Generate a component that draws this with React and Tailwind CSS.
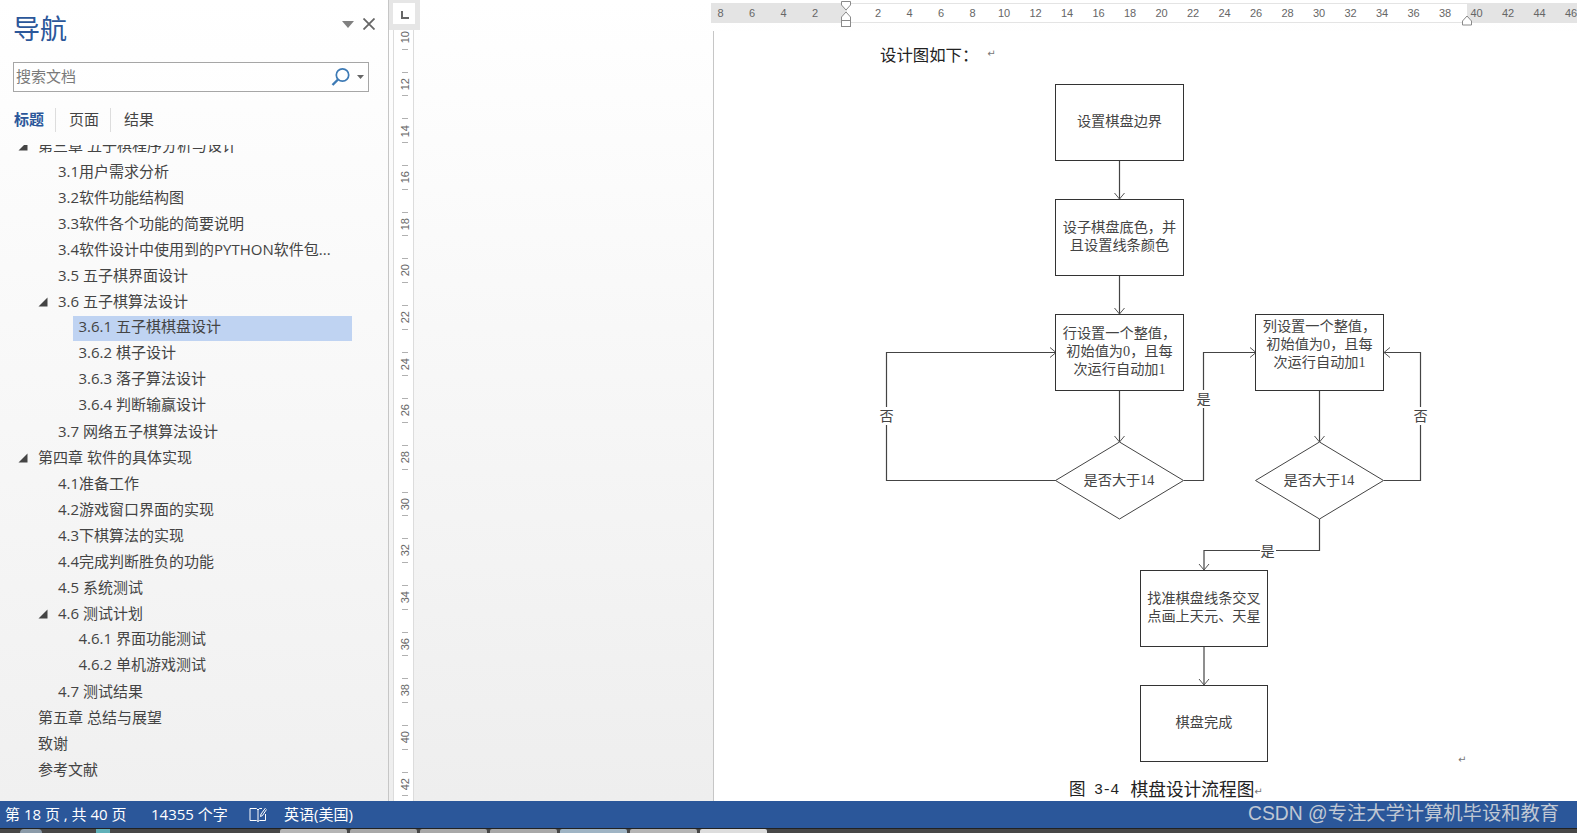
const ui = "font-['Open_Sans','Noto_Sans_CJK_SC',sans-serif]";
const doc = "font-['Liberation_Serif','Noto_Sans_CJK_SC',serif]";

const rows = [
  { t: "第三章 五子棋程序分析与设计", l: 0, a: true },
  { t: "3.1用户需求分析", l: 1 },
  { t: "3.2软件功能结构图", l: 1 },
  { t: "3.3软件各个功能的简要说明", l: 1 },
  { t: "3.4软件设计中使用到的PYTHON软件包...", l: 1 },
  { t: "3.5 五子棋界面设计", l: 1 },
  { t: "3.6 五子棋算法设计", l: 1, a: true },
  { t: "3.6.1 五子棋棋盘设计", l: 2, s: true },
  { t: "3.6.2 棋子设计", l: 2 },
  { t: "3.6.3 落子算法设计", l: 2 },
  { t: "3.6.4 判断输赢设计", l: 2 },
  { t: "3.7 网络五子棋算法设计", l: 1 },
  { t: "第四章 软件的具体实现", l: 0, a: true },
  { t: "4.1准备工作", l: 1 },
  { t: "4.2游戏窗口界面的实现", l: 1 },
  { t: "4.3下棋算法的实现", l: 1 },
  { t: "4.4完成判断胜负的功能", l: 1 },
  { t: "4.5 系统测试", l: 1 },
  { t: "4.6 测试计划", l: 1, a: true },
  { t: "4.6.1 界面功能测试", l: 2 },
  { t: "4.6.2 单机游戏测试", l: 2 },
  { t: "4.7 测试结果", l: 1 },
  { t: "第五章 总结与展望", l: 0 },
  { t: "致谢", l: 0 },
  { t: "参考文献", l: 0 },
];

const pad = ["pl-[38px]", "pl-[58px]", "pl-[73px]"];
const arrowPos = ["left-[18px]", "left-[38px]", "left-[58px]"];

function TreeRow({ r }) {
  return (
    <div className={"relative h-[26px] flex items-center " + pad[r.l]}>
      {r.a && (
        <svg className={"absolute top-[9px] " + arrowPos[r.l]} width="10" height="10" viewBox="0 0 10 10">
          <polygon points="0.5,9.5 9.5,9.5 9.5,0.5" fill="#444444" />
        </svg>
      )}
      {r.l === 2 ? (
        <div className={"w-[279px] h-[25px] mt-[2px] flex items-center pl-[5.5px] pb-[3px] " + (r.s ? "bg-[#bfd3f2]" : "")}>
          <span className="text-[15px] text-[#444444] whitespace-nowrap">{r.t}</span>
        </div>
      ) : (
        <span className="text-[15px] text-[#444444] whitespace-nowrap">{r.t}</span>
      )}
    </div>
  );
}

function Nav() {
  return (
    <aside className={"w-[389px] shrink-0 h-full border-r border-[#c6c6c6] bg-gradient-to-b from-white to-[#f0f0f0] flex flex-col " + ui}>
      <div className="h-[62px] shrink-0 flex items-start pl-[13px] pr-[13px]">
        <span className="text-[27px] leading-[36px] mt-[11px] text-[#2b579a]">导航</span>
        <div className="ml-auto flex items-center gap-[9px] mt-[18px]">
          <svg width="12" height="7" viewBox="0 0 12 7"><polygon points="0,0 12,0 6,7" fill="#808080" /></svg>
          <svg width="12" height="12" viewBox="0 0 12 12"><path d="M0.5 0.5 L11.5 11.5 M11.5 0.5 L0.5 11.5" stroke="#666666" strokeWidth="1.8" fill="none" /></svg>
        </div>
      </div>
      <div className="ml-[13px] mr-[19px] h-[30px] shrink-0 border border-[#a6a6a6] bg-white/60 flex items-center pl-[2px] pr-[4px]">
        <span className="text-[15px] leading-[20px] -mt-[2px] text-[#7a7a7a]">搜索文档</span>
        <svg className="ml-auto" width="20" height="20" viewBox="0 0 20 20">
          <circle cx="11.5" cy="8" r="6.2" stroke="#3d7ab5" strokeWidth="1.7" fill="none" />
          <path d="M7 12.5 L1.5 18" stroke="#3d7ab5" strokeWidth="2.4" fill="none" />
        </svg>
        <svg className="ml-[6px]" width="7" height="4" viewBox="0 0 7 4"><polygon points="0,0 7,0 3.5,4" fill="#666666" /></svg>
      </div>
      <div className="h-[53px] shrink-0 flex items-center pl-[14px] pt-[2px] text-[15px]">
        <span className="font-bold text-[#2b579a] w-[41px]">标题</span>
        <span className="w-px h-[24px] bg-[#dddddd]" />
        <span className="ml-[13px] w-[41px] text-[#444444]">页面</span>
        <span className="w-px h-[24px] bg-[#dddddd]" />
        <span className="ml-[13px] text-[#444444]">结果</span>
      </div>
      <div className="flex-1 overflow-hidden">
        <div className="-mt-[13px]">
          {rows.map((r) => (
            <TreeRow key={r.t} r={r} />
          ))}
        </div>
      </div>
    </aside>
  );
}

const vNums = [10, 12, 14, 16, 18, 20, 22, 24, 26, 28, 30, 32, 34, 36, 38, 40, 42];

function VRuler() {
  return (
    <div className="w-[31px] shrink-0 flex flex-col h-full">
      <div className="h-[30px] shrink-0 bg-[#e6e6e6] pl-[4px] pt-[3px]">
        <div className="w-[22px] h-[21px] bg-white flex items-center justify-center pt-[3px] pl-[2px]">
          <div className="w-[8px] h-[8px] border-l-2 border-b-2 border-[#666666]" />
        </div>
      </div>
      <div className="flex-1 ml-[4px] w-[21px] bg-white border-x border-[#dcdcdc] overflow-hidden">
        <div className="-mt-[16px] pl-[7px]">
          {vNums.map((n) => (
            <div key={n} className="h-[46.67px] flex flex-col items-center justify-between py-[11px] w-[7px] font-['Liberation_Sans',sans-serif]">
              <div className="w-[6px] h-px shrink-0 bg-[#b0b0b0]" />
              <span className="[writing-mode:vertical-rl] rotate-180 text-[11px] leading-[10px] text-[#666666]">{n}</span>
              <div className="w-[6px] h-px shrink-0 bg-[#b0b0b0]" />
            </div>
          ))}
        </div>
      </div>
    </div>
  );
}

const hNums = [8, 6, 4, 2, "", 2, 4, 6, 8, 10, 12, 14, 16, 18, 20, 22, 24, 26, 28, 30, 32, 34, 36, 38, 40, 42, 44, 46];

function HRuler() {
  return (
    <div className="h-[31px] shrink-0 pt-[3px] relative">
      <div className="relative h-[20px] flex overflow-hidden">
        <div className="w-[135.5px] h-full bg-[#e4e4e4]" />
        <div className="w-[620.5px] h-full bg-white border-y border-[#e4e4e4]" />
        <div className="flex-1 h-full bg-[#e4e4e4]" />
        <div className="absolute left-[-6.25px] top-0 h-full flex font-['Liberation_Sans',sans-serif]">
          {hNums.map((n, i) => (
            <span key={i} className="w-[31.5px] shrink-0 h-full flex items-center justify-center text-[11px] text-[#666666]">{n}</span>
          ))}
        </div>
      </div>
      <svg className="absolute left-[129px] top-0" width="12" height="31" viewBox="0 0 12 31">
        <path d="M1.5 1.5 H10.5 V5 L6 10 L1.5 5 Z" fill="white" stroke="#8a8a8a" />
        <path d="M6 12 L10.5 17 V20.5 H1.5 V17 Z" fill="white" stroke="#8a8a8a" />
        <rect x="1.5" y="20.5" width="9" height="6" fill="white" stroke="#8a8a8a" />
      </svg>
      <svg className="absolute left-[750px] top-[15px]" width="12" height="11" viewBox="0 0 12 11">
        <path d="M6 1 L10.5 6 V10 H1.5 V6 Z" fill="white" stroke="#8a8a8a" />
      </svg>
    </div>
  );
}

function Box({ pos, children, top }) {
  return (
    <div className={"absolute h-[77px] bg-white border border-[#333333] flex justify-center text-center text-[14.2px] leading-[18px] text-[#444444] whitespace-nowrap " + (top ? "items-start pt-[2px] " : "items-center pb-[3px] ") + pos}>
      <div>{children}</div>
    </div>
  );
}

function Arrow({ d }) {
  return <path d={d} stroke="#555555" fill="none" strokeWidth="1" />;
}

function Flow() {
  return (
    <div className={"relative h-[697px] shrink-0 " + doc}>
      <svg className="absolute left-0 top-0" width="862" height="697" viewBox="0 0 862 697">
        <g stroke="#444444" fill="none" strokeWidth="1.2">
          <path d="M405.5 77 V115" />
          <path d="M405.5 192 V230" />
          <path d="M405.5 307 V358" />
          <path d="M605.5 307 V358" />
          <path d="M342 396.5 H172.5 V268.5 H342" />
          <path d="M470 396.5 H489.5 V268.5 H542" />
          <path d="M670 396.5 H706.5 V268.5 H670" />
          <path d="M605.5 435 V466.5 H490 V486" />
          <path d="M490 563 V601" />
        </g>
        <g>
          <Arrow d="M400.5 109 L405.5 115 L410.5 109" />
          <Arrow d="M400.5 224 L405.5 230 L410.5 224" />
          <Arrow d="M400.5 352 L405.5 358 L410.5 352" />
          <Arrow d="M600.5 352 L605.5 358 L610.5 352" />
          <Arrow d="M336 263.5 L342 268.5 L336 273.5" />
          <Arrow d="M536 263.5 L542 268.5 L536 273.5" />
          <Arrow d="M676 263.5 L670 268.5 L676 273.5" />
          <Arrow d="M485 480 L490 486 L495 480" />
          <Arrow d="M485 595 L490 601 L495 595" />
        </g>
        <polygon points="341.5,396.5 405.5,358 469.5,396.5 405.5,435" fill="white" stroke="#444444" />
        <polygon points="541.5,396.5 605.5,358 669.5,396.5 605.5,435" fill="white" stroke="#444444" />
      </svg>
      <Box pos="w-[129px] left-[341px] top-0">设置棋盘边界</Box>
      <Box pos="w-[129px] left-[341px] top-[115px]">设子棋盘底色，并<br />且设置线条颜色</Box>
      <Box pos="w-[129px] left-[341px] top-[230px]">行设置一个整值，<br />初始值为0，且每<br />次运行自动加1</Box>
      <Box top pos="w-[129px] left-[541px] top-[230px]">列设置一个整值，<br />初始值为0，且每<br />次运行自动加1</Box>
      <Box pos="w-[128px] left-[426px] top-[486px]">找准棋盘线条交叉<br />点画上天元、天星</Box>
      <Box pos="w-[128px] left-[426px] top-[601px]">棋盘完成</Box>
      <span className="absolute left-[341px] top-[387px] w-[128px] text-center text-[14.2px] leading-[19px] text-[#444444]">是否大于14</span>
      <span className="absolute left-[541px] top-[387px] w-[128px] text-center text-[14.2px] leading-[19px] text-[#444444]">是否大于14</span>
      <span className="absolute left-[164.5px] top-[323px] w-[16px] h-[18px] bg-white text-center text-[14.2px] leading-[18px] text-[#444444]">否</span>
      <span className="absolute left-[481.5px] top-[306px] w-[16px] h-[18px] bg-white text-center text-[14.2px] leading-[18px] text-[#444444]">是</span>
      <span className="absolute left-[698.5px] top-[323px] w-[16px] h-[18px] bg-white text-center text-[14.2px] leading-[18px] text-[#444444]">否</span>
      <span className="absolute left-[545.5px] top-[458px] w-[16px] h-[18px] bg-white text-center text-[14.2px] leading-[18px] text-[#444444]">是</span>
      <span className="absolute left-[744px] top-[668px] text-[10px] leading-[16px] text-[#777777] font-['DejaVu_Sans',sans-serif]">↵</span>
    </div>
  );
}

function Doc() {
  return (
    <div className="flex-1 min-w-0 h-full flex flex-col">
      <HRuler />
      <div className="flex-1 min-h-0 ml-[2px] border-l border-[#c6c6c6] bg-white flex flex-col overflow-hidden">
        <div className="h-[53px] shrink-0 pl-[166px] pt-[12px] flex items-start">
          <span className="text-[16.4px] leading-[22px] text-[#222222] font-['Noto_Sans_CJK_SC',sans-serif]">设计图如下：</span>
          <span className="text-[10px] leading-[22px] ml-[9px] text-[#777777] font-['DejaVu_Sans',sans-serif]">↵</span>
        </div>
        <Flow />
        <div className="pl-[355px] flex items-center h-[20px] text-[#222222] whitespace-pre font-['Liberation_Mono','Noto_Sans_CJK_SC',monospace]">
          <span className="text-[16.5px] w-[17px]">图</span>
          <span className="text-[15px] tracking-[-0.9px] mr-[4px]"> 3-4 </span>
          <span className="text-[17.7px]">棋盘设计流程图</span>
          <span className="text-[10px] text-[#777777] font-['DejaVu_Sans',sans-serif]">↵</span>
        </div>
      </div>
    </div>
  );
}

function StatusBar() {
  return (
    <div className={"relative h-[27px] shrink-0 bg-[#2b579a] flex items-center pl-[5px] text-[15px] text-white " + ui}>
      <span className="w-[146px] whitespace-nowrap">第 18 页 , 共 40 页</span>
      <span className="w-[98px] whitespace-nowrap">14355 个字</span>
      <svg width="18" height="16" viewBox="0 0 18 16" className="shrink-0">
        <path d="M1 1.5 H7.5 L9 3 V14.5 L7.5 13.5 H1 Z M9 3 L10.5 1.5 H13 M9 14.5 L10.5 13.5 H16.5 V7" stroke="white" fill="none" />
        <path d="M16.5 1 L12 7 L11.5 9.5 L13.5 8.5 L17.5 2.5" stroke="white" fill="none" />
      </svg>
      <span className="ml-[17px] whitespace-nowrap">英语(美国)</span>
      <span className="absolute right-[18px] top-0 h-full flex items-center text-[19.3px] text-[#c0c8d4] whitespace-nowrap font-['Liberation_Sans','Noto_Sans_CJK_SC',sans-serif]">CSDN @专注大学计算机毕设和教育</span>
    </div>
  );
}

function Taskbar() {
  const thumbs = ["bg-[#b5b5b5]", "bg-[#a8a8a8]", "bg-[#a8a8a8]", "bg-[#a8a8a8]", "bg-[#9fb4c4]", "bg-[#b5b5b5]", "bg-[#dddddd]"];
  return (
    <div className="h-[5px] shrink-0 bg-[#474747] border-t border-[#222222] flex pl-[20px] overflow-hidden">
      <div className="w-[22px] h-full rounded-t-full bg-[#8a9aa8]" />
      <div className="ml-[54px] w-[14px] h-full bg-[#5fb0b8]" />
      <div className="ml-[170px] flex gap-[3.5px]">
        {thumbs.map((c, i) => (
          <div key={i} className={"w-[66.5px] h-full rounded-t-[2px] " + c} />
        ))}
      </div>
    </div>
  );
}

export default function App() {
  return (
    <div lang="zh-CN" className="w-[1577px] h-[833px] overflow-hidden flex flex-col bg-white">
      <div className="flex-1 min-h-0 flex">
        <Nav />
        <div className="flex-1 min-w-0 h-full flex bg-gradient-to-b from-white to-[#eeeeee]">
          <VRuler />
          <div className="w-[291px] shrink-0" />
          <Doc />
        </div>
      </div>
      <StatusBar />
      <Taskbar />
    </div>
  );
}
